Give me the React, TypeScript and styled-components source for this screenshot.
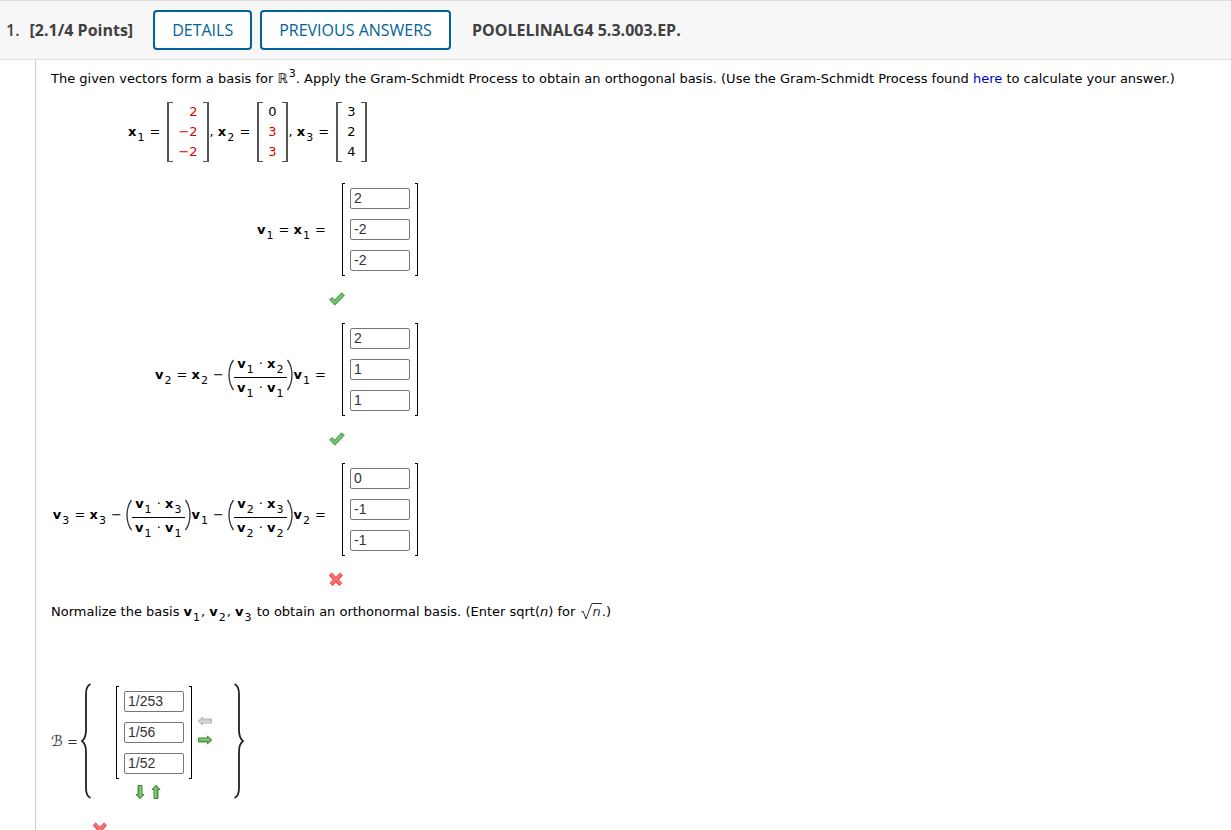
import React from "react";
import styled, { createGlobalStyle } from "styled-components";

const GlobalStyle = createGlobalStyle`
  * { box-sizing: border-box; }
  body {
    margin: 0;
    background: #fff;
    color: #000;
    font-family: "DejaVu Sans", Verdana, sans-serif;
    font-size: 13px;
    line-height: 20px;
  }
  p { margin: 0; }
`;

const Page = styled.main`
  height: 100vh;
  overflow: hidden;
`;

const Header = styled.header`
  display: flex;
  align-items: center;
  padding: 9px 6px;
  border-top: 1px solid #ddd;
  border-bottom: 1px solid #ddd;
  background: #f7f7f7;
  color: #404040;
  font-family: "Open Sans", sans-serif;
  font-size: 16px;
  font-weight: 600;
`;

const Points = styled.span`
  margin: 0 20px 0 10px;
  font-weight: 700;
`;

const HeaderButton = styled.button`
  height: 40px;
  margin-right: 8px;
  padding: 0 17px;
  border: 2px solid #006298;
  border-radius: 4px;
  background: #fff;
  color: #006298;
  font: 500 16px "Open Sans", sans-serif;
`;

const Title = styled.h1`
  margin: 0 0 0 13px;
  font-size: 16px;
  font-weight: 700;
`;

const Body = styled.section`
  margin-left: 35px;
  padding: 9px 15px 40px;
  border-left: 1px solid #ccc;
`;

const Link = styled.a`
  color: #00c;
  text-decoration: none;
`;

const Sup = styled.sup`
  margin-left: 1px;
  font-size: 11px;
  line-height: 0;
  vertical-align: 6px;
`;

const Sub = styled.sub`
  margin: 0 1px;
  font-size: 11px;
  line-height: 0;
  vertical-align: -5px;
`;

const VectorLine = styled.div`
  display: flex;
  align-items: center;
  margin: 13px 0 0 77px;
  white-space: pre;
`;

const Vector = styled.span`
  display: flex;
  align-items: stretch;
  margin: 0 1px 0 7px;
`;

const Edge = styled.span<{ $right?: boolean; $soft?: boolean }>`
  width: ${(p) => (p.$soft ? 6 : 3)}px;
  border: solid ${(p) => (p.$soft ? "#555" : "#000")};
  border-width: ${(p) => (p.$soft ? "1px 2px" : "1px")};
  border-${(p) => (p.$right ? "left" : "right")}: 0;
`;

const Entries = styled.span`
  display: flex;
  flex-direction: column;
  padding: 0 5px;
  text-align: right;
`;

const Entry = styled.span<{ $red?: boolean }>`
  color: ${(p) => (p.$red ? "#d00" : "#000")};
`;

const Steps = styled.div`
  display: grid;
  grid-template-columns: 275px auto;
  column-gap: 16px;
  justify-content: start;
  margin-top: 21px;
`;

const Equation = styled.div<{ $low?: boolean }>`
  display: flex;
  align-items: center;
  justify-content: flex-end;
  padding-top: ${(p) => (p.$low ? 10 : 0)}px;
  white-space: pre;
`;

const Matrix = styled.div`
  display: flex;
  gap: 5px;
`;

const Inputs = styled.div`
  display: flex;
  flex-direction: column;
  gap: 10px;
  padding: 5px 0;
`;

const Box = styled.input`
  width: 60px;
  height: 21px;
  padding: 0 3px 2px;
  border: 1px solid #767676;
  border-radius: 2px;
  background: #fff;
  color: #333;
  font: 14px "Liberation Sans", Arial, sans-serif;
`;

const Mark = styled.div`
  grid-column: 1 / -1;
  height: 47px;
  padding: 16px 0 0 278px;
  line-height: 0;
`;

const Group = styled.span`
  display: flex;
  align-items: center;
`;

const Fraction = styled.span`
  display: flex;
  flex-direction: column;
  align-items: center;
  height: 40px;
`;

const Term = styled.span`
  flex: none;
  padding: 0 3px;
  line-height: 20px;
  &:first-child {
    height: 23px;
    border-bottom: 1px solid #000;
    line-height: 18px;
  }
`;

const Root = styled.svg`
  vertical-align: -4px;
`;

const Radicand = styled.i`
  display: inline-block;
  padding: 0 1px;
  border-top: 1px solid #333;
  color: #333;
  line-height: 16px;
`;

const Prompt = styled.p`
  margin-top: -1px;
`;

const SetLine = styled.div`
  display: flex;
  align-items: center;
  margin-top: 60px;
`;

const SetName = styled.span`
  width: 30px;
  color: #333;
`;

const Script = styled.span`
  font-size: 15px;
  font-style: italic;
`;

const SetBody = styled.div`
  display: grid;
  grid-template-columns: auto auto;
  column-gap: 5px;
  padding: 4px 20px 0 24px;
`;

const Arrows = styled.div<{ $column?: boolean }>`
  display: flex;
  flex-direction: ${(p) => (p.$column ? "column" : "row")};
  align-items: center;
  justify-content: center;
  gap: ${(p) => (p.$column ? 3 : 0)}px;
  padding-top: ${(p) => (p.$column ? 0 : 5)}px;
  padding-bottom: ${(p) => (p.$column ? 4 : 0)}px;
  padding-right: ${(p) => (p.$column ? 0 : 12)}px;
`;

const ArrowButton = styled.button`
  display: flex;
  padding: 0;
  border: 0;
  background: none;
`;

const SetMark = styled.div`
  padding: 22px 0 0 42px;
  line-height: 0;
`;

const V = ({ n, name = "v" }: { n: number; name?: string }) => (
  <span><b>{name}</b><Sub>{n}</Sub></span>
);

const Check = () => (
  <svg width="16" height="14" viewBox="0 0 16 14" role="img" aria-label="Correct">
    <path d="M.6 7.8 3 5.4 5.8 8 12.6.8 15.4 3.2 5.9 13.2Z" fill="#62b85e" stroke="#4a9a48" strokeWidth=".9" strokeLinejoin="round" />
    <path d="M2.6 7.4 6 10.4 13 3" fill="none" stroke="#93d58c" />
  </svg>
);

const Cross = () => (
  <svg width="14" height="14" viewBox="0 0 14 14" role="img" aria-label="Incorrect">
    <path d="M1.2 2 11.8 12.6M12.6 2 2 12.6" fill="none" stroke="#e8474c" strokeWidth="4.2" />
    <path d="M2 2.4 12 12M12 2.4 2 12" fill="none" stroke="#ff6e70" strokeWidth="2.6" />
  </svg>
);

const Arrow = ({ turn, off }: { turn: number; off?: boolean }) => (
  <svg width="16" height="16" viewBox="0 0 16 16" aria-hidden="true">
    <g transform={`rotate(${turn} 8 8)`}>
      <path d="M1.5 6H10.5V4L14.8 8 10.5 12V10H1.5Z" fill={off ? "#ccc" : "#66b060"} stroke={off ? "#b4b4b4" : "#3d8a3a"} />
      <path d="M2 7.4H12" stroke={off ? "#e2e2e2" : "#9ad492"} />
    </g>
  </svg>
);

const Paren = ({ right }: { right?: boolean }) => (
  <svg width="6" height="32" viewBox="0 0 6 32" aria-hidden="true">
    <path d={right ? "M.5 1Q5 7 5 16T.5 31" : "M5.5 1Q1 7 1 16T5.5 31"} fill="none" stroke="#333" strokeWidth="1.3" />
  </svg>
);

const Brace = ({ right }: { right?: boolean }) => (
  <svg width="11" height="116" viewBox="0 0 11 116" aria-hidden="true">
    <g transform={right ? "matrix(-1 0 0 1 11 0)" : undefined}>
      <path d="M9.5 1Q5 3 5 11V47Q5 55 1 58Q5 61 5 69V105Q5 113 9.5 115" fill="none" stroke="#222" strokeWidth="1.8" />
    </g>
  </svg>
);

const Quotient = ({ top, bottom }: { top: number[]; bottom: number }) => (
  <Group>
    <Paren />
    <Fraction>
      <Term><V n={top[0]} /> · <V name="x" n={top[1]} /></Term>
      <Term><V n={bottom} /> · <V n={bottom} /></Term>
    </Fraction>
    <Paren right />
  </Group>
);

const Given = ({ values, red = [] }: { values: string[]; red?: number[] }) => (
  <Vector>
    <Edge $soft />
    <Entries>
      {values.map((v, i) => <Entry key={i} $red={red.includes(i)}>{v}</Entry>)}
    </Entries>
    <Edge $soft $right />
  </Vector>
);

const Answer = ({ label, values }: { label: string; values: string[] }) => (
  <Matrix>
    <Edge />
    <Inputs>
      {values.map((v, i) => <Box key={i} aria-label={`${label} entry ${i + 1}`} defaultValue={v} />)}
    </Inputs>
    <Edge $right />
  </Matrix>
);

export default function App() {
  return (
    <Page>
      <GlobalStyle />
      <Header>
        <span>1.</span>
        <Points>[2.1/4 Points]</Points>
        <HeaderButton>DETAILS</HeaderButton>
        <HeaderButton>PREVIOUS ANSWERS</HeaderButton>
        <Title>POOLELINALG4 5.3.003.EP.</Title>
      </Header>
      <Body>
        <p>
          The given vectors form a basis for ℝ<Sup>3</Sup>. Apply the Gram-Schmidt Process to obtain an
          orthogonal basis. (Use the Gram-Schmidt Process found <Link href="#process">here</Link> to
          calculate your answer.)
        </p>
        <VectorLine>
          <V name="x" n={1} /> =<Given values={["2", "−2", "−2"]} red={[0, 1, 2]} />
          , <V name="x" n={2} /> =<Given values={["0", "3", "3"]} red={[1, 2]} />
          , <V name="x" n={3} /> =<Given values={["3", "2", "4"]} />
        </VectorLine>
        <Steps>
          <Equation><V n={1} /> = <V name="x" n={1} /> =</Equation>
          <Answer label="v1" values={["2", "-2", "-2"]} />
          <Mark><Check /></Mark>
          <Equation $low>
            <V n={2} /> = <V name="x" n={2} /> − <Quotient top={[1, 2]} bottom={1} /><V n={1} /> =
          </Equation>
          <Answer label="v2" values={["2", "1", "1"]} />
          <Mark><Check /></Mark>
          <Equation $low>
            <V n={3} /> = <V name="x" n={3} /> − <Quotient top={[1, 3]} bottom={1} /><V n={1} /> − <Quotient top={[2, 3]} bottom={2} /><V n={2} /> =
          </Equation>
          <Answer label="v3" values={["0", "-1", "-1"]} />
          <Mark><Cross /></Mark>
        </Steps>
        <Prompt>
          Normalize the basis <V n={1} />, <V n={2} />, <V n={3} /> to obtain an orthonormal basis. (Enter
          sqrt(<i>n</i>) for <Root width="12" height="18" viewBox="0 0 12 18" aria-hidden="true">
            <path d="M1 10.5 3 9 6 17 11.8 1.5" fill="none" stroke="#333" />
          </Root><Radicand>n</Radicand>.)
        </Prompt>
        <SetLine>
          <SetName><Script>ℬ</Script> =</SetName>
          <Brace />
          <SetBody>
            <Answer label="Basis vector" values={["1/253", "1/56", "1/52"]} />
            <Arrows $column>
              <ArrowButton aria-label="Remove column" disabled><Arrow turn={180} off /></ArrowButton>
              <ArrowButton aria-label="Add column"><Arrow turn={0} /></ArrowButton>
            </Arrows>
            <Arrows>
              <ArrowButton aria-label="Add row"><Arrow turn={90} /></ArrowButton>
              <ArrowButton aria-label="Remove row"><Arrow turn={270} /></ArrowButton>
            </Arrows>
          </SetBody>
          <Brace right />
        </SetLine>
        <SetMark><Cross /></SetMark>
      </Body>
    </Page>
  );
}
